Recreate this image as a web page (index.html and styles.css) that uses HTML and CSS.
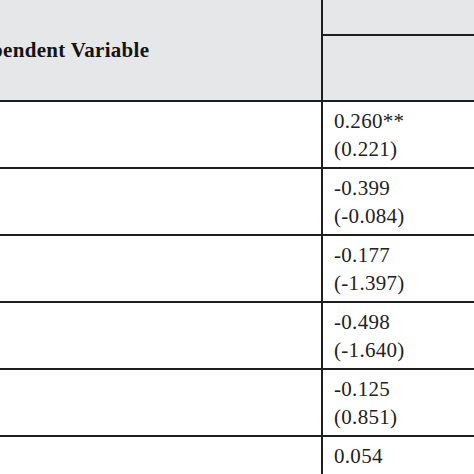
FILE: index.html
```html
<!DOCTYPE html>
<html lang="en">
<head>
<meta charset="utf-8">
<title>Regression table</title>
<link rel="stylesheet" href="styles.css">
</head>
<body>
<div class="viewport">
  <div class="sheet">
    <div class="head">
      <div class="head-label">Dependent Variable</div>
      <div class="head-right">
        <div class="head-top"></div>
        <div class="head-bottom"></div>
      </div>
    </div>
    <div class="row"><div class="label"></div><div class="val">0.260**<br>(0.221)</div></div>
    <div class="row"><div class="label"></div><div class="val">-0.399<br>(-0.084)</div></div>
    <div class="row"><div class="label"></div><div class="val">-0.177<br>(-1.397)</div></div>
    <div class="row"><div class="label"></div><div class="val">-0.498<br>(-1.640)</div></div>
    <div class="row"><div class="label"></div><div class="val">-0.125<br>(0.851)</div></div>
    <div class="row"><div class="label"></div><div class="val">0.054</div></div>
  </div>
</div>
</body>
</html>
```

FILE: styles.css
```css
html, body {
  margin: 0;
  padding: 0;
  background: #ffffff;
}

.viewport {
  width: 474px;
  height: 474px;
  overflow: hidden;
}

.sheet {
  margin-left: -40px;
  width: 560px;
  font-family: "Liberation Serif", "Times New Roman", serif;
  color: #141414;
}

.head {
  display: grid;
  grid-template-columns: 363px 1fr;
  height: 100px;
  background: #e6e7e9;
  border-bottom: 2px solid #1e1e1e;
}

.head-label {
  border-right: 2px solid #1e1e1e;
  display: flex;
  align-items: center;
  padding-left: 6px;
  font-weight: bold;
  font-size: 21px;
  letter-spacing: 0.3px;
}

.head-right {
  display: flex;
  flex-direction: column;
}

.head-top {
  height: 34px;
  border-bottom: 2px solid #1e1e1e;
}

.head-bottom {
  flex: 1;
}

.row {
  display: grid;
  grid-template-columns: 363px 1fr;
  height: 65px;
  border-bottom: 2px solid #1e1e1e;
}

.label {
  border-right: 2px solid #1e1e1e;
}

.val {
  padding: 5px 0 0 11px;
  font-size: 21px;
  line-height: 28px;
  letter-spacing: 0.3px;
  color: #222222;
}
```
